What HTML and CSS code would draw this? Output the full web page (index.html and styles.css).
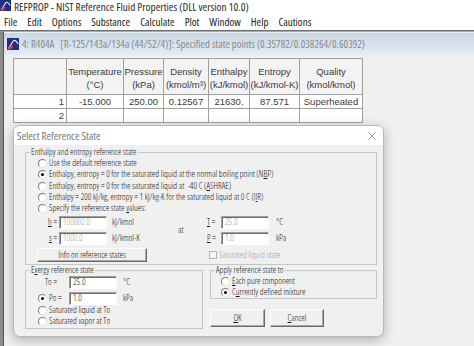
FILE: index.html
```html
<!DOCTYPE html>
<html>
<head>
<meta charset="utf-8">
<title>REFPROP</title>
<link rel="stylesheet" href="styles.css">
</head>
<body>
<div class="app">
  <div class="titlebar">
    <svg class="appicon" viewBox="0 0 12 12"><rect width="12" height="12" fill="#1f2f88"/><path d="M1 10.5 C3 10 4.5 4 7 2.5 C8.5 1.8 10 4 11 6" stroke="#f2f2f8" stroke-width="1.1" fill="none"/><path d="M1 11 L4.5 7.5 M2.5 11.5 L6 8" stroke="#e0485e" stroke-width="1.1"/></svg>
    <span>REFPROP - NIST Reference Fluid Properties (DLL version 10.0)</span>
  </div>
  <div class="menubar">
    <span>File</span><span>Edit</span><span>Options</span><span>Substance</span><span>Calculate</span><span>Plot</span><span>Window</span><span>Help</span><span>Cautions</span>
  </div>
  <div class="mdi">
    <div class="child">
      <div class="child-title">
        <svg class="childicon" viewBox="0 0 12 12"><rect width="12" height="12" fill="#1f2f88"/><path d="M1 10.5 C3 10 4.5 4 7 2.5 C8.5 1.8 10 4 11 6" stroke="#f2f2f8" stroke-width="1.1" fill="none"/><path d="M1 11 L4.5 7.5 M2.5 11.5 L6 8" stroke="#e0485e" stroke-width="1.1"/></svg>
        <span>4: R404A   [R-125/143a/134a (44/52/4)]: Specified state points (0.35782/0.038264/0.60392)</span>
      </div>
      <div class="child-client">
        <table class="grid">
          <colgroup><col class="c0"><col class="c1"><col class="c2"><col class="c3"><col class="c4"><col class="c5"><col class="c6"></colgroup>
          <tr class="hdr">
            <th></th>
            <th>Temperature<br>(°C)</th>
            <th>Pressure<br>(kPa)</th>
            <th>Density<br>(kmol/m³)</th>
            <th>Enthalpy<br>(kJ/kmol)</th>
            <th>Entropy<br>(kJ/kmol-K)</th>
            <th>Quality<br>(kmol/kmol)</th>
          </tr>
          <tr class="row">
            <td class="rh">1</td><td>-15.000</td><td>250.00</td><td>0.12567</td><td>21630.</td><td>87.571</td><td>Superheated</td>
          </tr>
          <tr class="row">
            <td class="rh">2</td><td></td><td></td><td></td><td></td><td></td><td></td>
          </tr>
        </table>
      </div>
    </div>
  </div>

  <div class="dialog">
    <div class="dlg-title">
      <span>Select Reference State</span>
      <svg class="close" viewBox="0 0 9 9"><path d="M0.5 0.5 L8.5 8.5 M8.5 0.5 L0.5 8.5" stroke="#8c8c8c" stroke-width="0.9"/></svg>
    </div>
    <div class="dlg-body">
      <fieldset class="g1">
        <legend>Enthalpy and entropy reference state</legend>
        <div class="opt"><span class="radio"></span><span>Use the default reference state</span></div>
        <div class="opt"><span class="radio on"></span><span>Enthalpy, entropy = 0 for the saturated liquid at the normal boiling point (N<u>B</u>P)</span></div>
        <div class="opt"><span class="radio"></span><span>Enthalpy, entropy = 0 for the saturated liquid at  -40 C (<u>A</u>SHRAE)</span></div>
        <div class="opt"><span class="radio"></span><span>Enthalpy = 200 kJ/kg, entropy = 1 kJ/kg-K for the saturated liquid at 0 C (I<u>I</u>R)</span></div>
        <div class="opt"><span class="radio"></span><span>Specify the reference state <u>v</u>alues:</span></div>
        <div class="values">
          <span class="lbl"><u>h</u> =</span>
          <span class="field dis">100000.0</span>
          <span class="unit">kJ/kmol</span>
          <span class="at">at</span>
          <span class="lbl2"><u>T</u> =</span>
          <span class="field dis">25.0</span>
          <span class="unit u7">°C</span>

          <span class="lbl"><u>s</u> =</span>
          <span class="field dis">1000.0</span>
          <span class="unit">kJ/kmol-K</span>
          <span class="lbl2"><u>P</u> =</span>
          <span class="field dis">1.0</span>
          <span class="unit u7">kPa</span>

          <span class="btn info">Info on reference states</span>
          <span class="chk"><span class="check"></span><span>Saturated liquid state</span></span>
        </div>
      </fieldset>

      <div class="lower">
        <fieldset class="g2">
          <legend>E<u>x</u>ergy reference state</legend>
          <div class="exgrid">
            <span class="lbl3">To =</span>
            <span class="field">25.0</span>
            <span class="unit u6">°C</span>
            <span class="opt po"><span class="radio on"></span><span>Po =</span></span>
            <span class="field">1.0</span>
            <span class="unit u6">kPa</span>
          </div>
          <div class="opt r11"><span class="radio"></span><span>Saturated liquid at To</span></div>
          <div class="opt r11"><span class="radio"></span><span>Saturated vapor at To</span></div>
        </fieldset>

        <div class="rightcol">
          <fieldset class="g3">
            <legend>Apply reference state to</legend>
            <div class="opt r11"><span class="radio"></span><span><u>E</u>ach pure component</span></div>
            <div class="opt r11"><span class="radio on"></span><span>C<u>u</u>rrently defined mixture</span></div>
          </fieldset>
          <div class="buttons">
            <span class="btn ok"><span><u>O</u>K</span></span>
            <span class="btn cancel"><span><u>C</u>ancel</span></span>
          </div>
        </div>
      </div>
    </div>
  </div>
</div>
</body>
</html>
```
FILE: styles.css
```css
html, body {
  margin: 0;
  padding: 0;
}
body {
  width: 474px;
  height: 346px;
  overflow: hidden;
  background: #fff;
  font-family: "Open Sans", "Liberation Sans", sans-serif;
}
.app {
  position: relative;
  width: 474px;
  height: 346px;
  display: flex;
  flex-direction: column;
}

/* main title bar */
.titlebar {
  height: 13px;
  flex: none;
  display: flex;
  align-items: center;
  gap: 3px;
  font-size: 11.2px;
  font-stretch: 82%;
  line-height: 13px;
  color: #2a2a2a;
  white-space: nowrap;
}
.appicon {
  width: 11px;
  height: 11px;
  flex: none;
  align-self: flex-start;
}

/* menu */
.menubar {
  height: 17px;
  flex: none;
  display: flex;
  align-items: center;
  gap: 10px;
  padding-left: 4px;
  font-size: 11px;
  font-stretch: 78%;
  line-height: 13px;
  color: #1a1a1a;
  white-space: nowrap;
}

/* MDI area */
.mdi {
  flex: 1;
  min-height: 0;
  display: flex;
  background: #8c8c8c;
  border-top: 1px solid #6e6e6e;
}
.child {
  flex: 1;
  margin-left: 3px;
  border-left: 1px solid #505050;
  border-top: 1px solid #a8a8a8;
  padding-top: 1px;
  background: #f0f0f0;
  display: flex;
  flex-direction: column;
}
.child-title {
  height: 22px;
  flex: none;
  display: flex;
  align-items: center;
  gap: 3px;
  padding-left: 3px;
  background: linear-gradient(#c8d6e5, #e4ecf5);
  color: #8a8a8a;
  font-size: 10.75px;
  font-stretch: 82%;
  line-height: 13px;
  white-space: pre;
}
.childicon {
  width: 12px;
  height: 12px;
  flex: none;
}
.child-client {
  padding: 3px 0 0 9px;
}

/* grid table */
table.grid {
  border-collapse: collapse;
  table-layout: fixed;
  width: 349px;
  font-family: "Liberation Sans", Arial, sans-serif;
  font-size: 9.5px;
  line-height: 13px;
  color: #3a3a3a;
  background: #fff;
}
.grid col.c0 { width: 53px; }
.grid col.c1 { width: 57px; }
.grid col.c2 { width: 40px; }
.grid col.c3 { width: 45px; }
.grid col.c4 { width: 41px; }
.grid col.c5 { width: 50px; }
.grid col.c6 { width: 63px; }
.grid th,
.grid td {
  border: 1px solid #a0a0a0;
  padding: 0;
  text-align: center;
  font-weight: normal;
  white-space: nowrap;
  overflow: hidden;
}
.grid tr.hdr th {
  height: 29px;
  padding-top: 6px;
  vertical-align: top;
  background: #f3f3f3;
}
.grid tr.row td {
  height: 12px;
}
.grid td.rh {
  text-align: right;
  padding-right: 2px;
}

/* dialog */
.dialog {
  position: absolute;
  left: 13px;
  top: 125px;
  width: 371px;
  height: 212px;
  box-sizing: border-box;
  border: 1px solid #b8b8b8;
  border-radius: 7px;
  background: #f0f0f0;
  box-shadow: 0 3px 12px rgba(0, 0, 0, 0.28);
  overflow: hidden;
  display: flex;
  flex-direction: column;
  font-size: 8.8px;
  font-weight: 350;
  font-stretch: 75%;
  line-height: 11px;
  color: #111;
}
.dlg-title {
  height: 19px;
  flex: none;
  background: #fff;
  display: flex;
  align-items: center;
  justify-content: space-between;
  padding: 0 7px 0 3px;
  font-size: 11px;
  font-weight: 400;
  font-stretch: 82%;
  line-height: 13px;
  color: #767676;
}
.close {
  width: 8px;
  height: 8px;
}
.dlg-body {
  padding: 2px 6px 0 11px;
}

fieldset {
  margin: 0;
  min-width: 0;
  border: 1px solid #c6c6c6;
}
legend {
  padding: 0 1px;
  line-height: 11px;
}
.g1 {
  padding: 0 12px 2px 12px;
}
.g1 legend,
.g2 legend {
  margin-left: -8px;
}

.opt {
  display: flex;
  align-items: center;
  gap: 2px;
  height: 11.25px;
  line-height: 11px;
  white-space: pre;
}
.opt.r11 {
  height: 11px;
}
.radio {
  position: relative;
  flex: none;
  width: 9px;
  height: 9px;
  box-sizing: border-box;
  border-radius: 50%;
  border: 1px solid;
  border-color: #7e7e7e #e4e4e4 #e4e4e4 #7e7e7e;
  background: #fff;
}
.radio.on::after {
  content: "";
  position: absolute;
  left: 2px;
  top: 2px;
  width: 3px;
  height: 3px;
  border-radius: 50%;
  background: #000;
}

.values {
  display: grid;
  grid-template-columns: 21px 48px 71px 29px 14px 48px auto;
  grid-template-rows: 13px 13px 14px;
  row-gap: 3px;
  align-items: center;
  margin-top: 2px;
  white-space: nowrap;
}
.lbl {
  text-align: right;
  padding-right: 2px;
}
.lbl2 {
  text-align: left;
}
.unit {
  padding-left: 5px;
}
.unit.u7 {
  padding-left: 7px;
}
.unit.u6 {
  padding-left: 6px;
}
.at {
  grid-column: 4;
  grid-row: 1 / 3;
}
.field {
  box-sizing: border-box;
  height: 13px;
  border: 1px solid;
  border-color: #a0a0a0 #fdfdfd #fdfdfd #a0a0a0;
  box-shadow: inset 1px 1px 0 #6e6e6e;
  background: #fff;
  padding-left: 3px;
  line-height: 11px;
  color: #111;
}
.field.dis {
  color: #a0a0a0;
}
.btn {
  box-sizing: border-box;
  display: flex;
  align-items: center;
  justify-content: center;
  background: #f0f0f0;
  border: 1px solid;
  border-color: #fff #6a6a6a #6a6a6a #fff;
  box-shadow: inset -1px -1px 0 #a8a8a8;
  white-space: nowrap;
}
.btn.info {
  grid-column: 1 / 4;
  width: 110px;
  height: 14px;
  margin-left: -1px;
}
.chk {
  grid-column: 5 / 8;
  display: flex;
  align-items: center;
  gap: 2px;
  padding-left: 2px;
  color: #a0a0a0;
}
.check {
  flex: none;
  width: 8px;
  height: 8px;
  box-sizing: border-box;
  border: 1px solid #b4b4b4;
  background: #f6f6f6;
}

.lower {
  display: flex;
  align-items: flex-start;
}
.g2 {
  width: 178px;
  box-sizing: border-box;
  padding: 0 12px 1px 12px;
}
.exgrid {
  display: grid;
  grid-template-columns: 31px 48px auto;
  grid-template-rows: 13px 13px;
  row-gap: 3px;
  align-items: center;
  white-space: nowrap;
}
.lbl3 {
  padding-left: 7px;
}
.opt.po {
  height: 13px;
}
.rightcol {
  width: 167px;
  margin-left: 7px;
  display: flex;
  flex-direction: column;
}
.g3 {
  padding: 0 10px 0 10px;
}
.g3 legend {
  margin-left: -6px;
}
.buttons {
  display: flex;
  gap: 5px;
  margin-top: 10px;
}
.btn.ok {
  width: 55px;
  height: 18px;
}
.btn.cancel {
  width: 54px;
  height: 18px;
}
```
